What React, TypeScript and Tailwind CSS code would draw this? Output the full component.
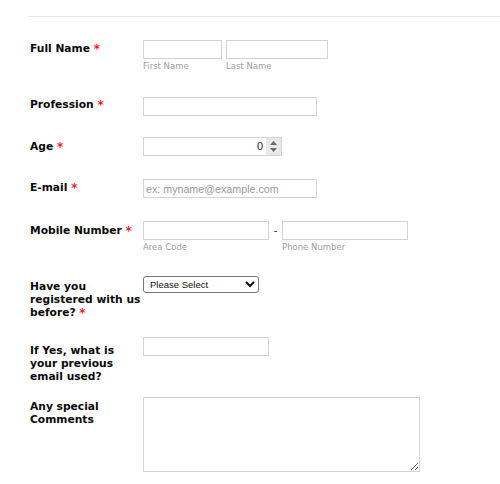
import React from "react";

const labelCls =
  "w-[113px] shrink-0 font-['DejaVu_Sans',Verdana,sans-serif] font-bold text-[10.7px] leading-[13px] text-[#0a0a0a]";
const inputCls =
  "box-border h-[19px] border border-[#d3d3d3] bg-white px-[2px] font-['Liberation_Sans',Arial,sans-serif] text-[10.7px] text-[#333] placeholder:text-[#999] outline-none";
const subCls =
  "font-['DejaVu_Sans',Verdana,sans-serif] text-[8.5px] leading-[12px] text-[#a0a0a0] mt-[1px]";

function Star() {
  return (
    <>
      {" "}
      <span className="inline-block align-top translate-y-[1px] text-[#ff1a1a] text-[12px] leading-[13px]">
        *
      </span>
    </>
  );
}

export default function App() {
  return (
    <div className="w-[500px] h-[484px] bg-white overflow-hidden">
      <div className="h-[16px]" />
      <div className="h-px bg-[#e8e8e8] ml-[28px]" />
      <div className="pl-[30px] mt-[23px] flex flex-col">
        {/* Full Name */}
        <div className="flex h-[57px]">
          <div className={labelCls + " pt-[2px]"}>
            Full Name<Star />
          </div>
          <div className="flex gap-[4px]">
            <div className="flex flex-col">
              <input className={inputCls + " w-[79px]"} />
              <div className={subCls}>First Name</div>
            </div>
            <div className="flex flex-col">
              <input className={inputCls + " w-[102px]"} />
              <div className={subCls}>Last Name</div>
            </div>
          </div>
        </div>
        {/* Profession */}
        <div className="flex h-[40px]">
          <div className={labelCls + " pt-[1px]"}>
            Profession<Star />
          </div>
          <input className={inputCls + " w-[174px]"} />
        </div>
        {/* Age */}
        <div className="flex h-[42px]">
          <div className={labelCls + " pt-[3px]"}>
            Age<Star />
          </div>
          <div className="box-border h-[19px] w-[139px] border border-[#d3d3d3] bg-white flex">
            <div className="flex-1 text-right pr-[3px] font-['Liberation_Sans',Arial,sans-serif] text-[11px] leading-[17px] text-[#222]">
              0
            </div>
            <div className="w-[15px] h-full bg-[#e9e9e9] flex flex-col items-center justify-center gap-[3px]">
              <svg width="7" height="4" viewBox="0 0 7 4">
                <path d="M3.5 0 L7 4 L0 4 Z" fill="#6b6b6b" />
              </svg>
              <svg width="7" height="4" viewBox="0 0 7 4">
                <path d="M0 0 L7 0 L3.5 4 Z" fill="#6b6b6b" />
              </svg>
            </div>
          </div>
        </div>
        {/* E-mail */}
        <div className="flex h-[42px]">
          <div className={labelCls + " pt-[2px]"}>
            E-mail<Star />
          </div>
          <input
            className={inputCls + " w-[174px]"}
            placeholder="ex: myname@example.com"
          />
        </div>
        {/* Mobile */}
        <div className="flex h-[55px]">
          <div className={labelCls + " pt-[3px]"}>
            Mobile Number<Star />
          </div>
          <div className="flex">
            <div className="flex flex-col">
              <input className={inputCls + " w-[126px]"} />
              <div className={subCls}>Area Code</div>
            </div>
            <div className="w-[13px] text-center font-['Liberation_Sans',Arial,sans-serif] text-[11px] leading-[19px] text-[#333]">
              -
            </div>
            <div className="flex flex-col">
              <input className={inputCls + " w-[126px]"} />
              <div className={subCls}>Phone Number</div>
            </div>
          </div>
        </div>
        {/* Registered */}
        <div className="flex h-[61px]">
          <div className={labelCls + " pt-[4px]"}>
            Have you registered with us before?<Star />
          </div>
          <select className="box-border h-[17px] w-[116px] border border-[#767676] rounded-[3px] bg-white pl-[2px] font-['Liberation_Sans',Arial,sans-serif] text-[9.5px] text-[#111]">
            <option>Please Select</option>
          </select>
        </div>
        {/* If Yes */}
        <div className="flex h-[60px]">
          <div className={labelCls + " pt-[7px]"}>
            If Yes, what is your previous email used?
          </div>
          <input className={inputCls + " w-[126px]"} />
        </div>
        {/* Comments */}
        <div className="flex">
          <div className={labelCls + " pt-[3px]"}>Any special Comments</div>
          <textarea className="box-border h-[75px] w-[277px] border border-[#d3d3d3] bg-white" />
        </div>
      </div>
    </div>
  );
}
